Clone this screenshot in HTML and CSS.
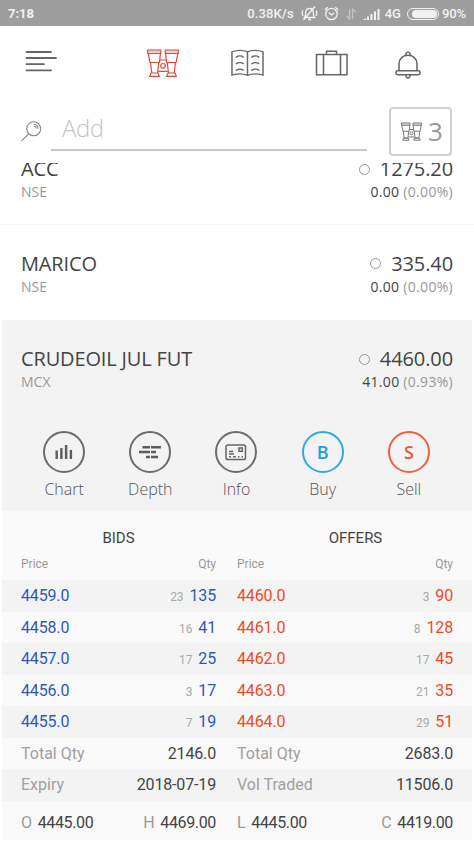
FILE: index.html
```html
<!DOCTYPE html>
<html lang="en">
<head>
<meta charset="utf-8">
<title>Marketwatch</title>
<link rel="stylesheet" href="styles.css">
</head>
<body>
<svg class="defs" aria-hidden="true">
  <symbol id="binoculars" viewBox="0 0 32 28">
    <path class="band" d="M.7 1h13v3.500H.7zM18.300 1h13v3.500h-13z"/>
    <path d="M1.200 4.500l1.700 9h9.600l.9-9M30.800 4.500l-1.700 9h-9.600l-.9-9M3.500 13.500l1.300 10.500h5.700l1.300-10.500M28.500 13.500l-1.300 10.500h-5.700l-1.300-10.500M4 24l-1.300 3.300h9.600L11 24zM28 24l1.300 3.300h-9.600L21 24zM13 11h6M11.500 22.300h9"/>
    <circle cx="16" cy="16.800" r="2.300"/>
  </symbol>
</svg>

<header class="status">
  <span class="clock">7:18</span>
  <span class="speed">0.38K/s</span>
  <svg class="mute" width="17" height="17" viewBox="0 0 17 17"><path d="M3.500 12.500c1.200-1.200 1.200-3 1.200-5C4.700 5 6.300 3.500 8.500 3.500S12.300 5 12.300 7.500c0 2 0 3.800 1.200 5zM7 14.500h3M1.800 5.500C1 7.500 1 9 2 11M15.200 5.500c.8 2 .8 3.500-.2 5.500M2.500 15L14 1.500"/></svg>
  <svg class="alarm" width="15" height="15" viewBox="0 0 15 15"><circle cx="7.500" cy="8" r="5.700"/><path d="M4.700 6.500l2.800 2.500 2.800-2.200M.8 4l2.900-2.800M14.200 4l-2.900-2.800"/></svg>
  <svg class="data" width="12" height="12" viewBox="0 0 12 12"><path d="M4.500 1v10L1.500 8M7.500 11V1l3 3"/></svg>
  <svg class="signal" width="17" height="12" viewBox="0 0 17 12"><path d="M0 12l3-2v2zM4 8.500h2V12H4zM7.500 6h2v6h-2zM11 3.500h2V12h-2zM14.500 1h2v11h-2z"/></svg>
  <span class="network">4G</span>
  <span class="battery"><i></i></span>
  <span class="percent">90%</span>
</header>

<nav class="tabs">
  <svg class="menu" width="32" height="22" viewBox="0 0 32 22"><path d="M1.500 2h24.500M1.500 8h29.500M1.500 14.200h17.500M1.500 20.400h24.500"/></svg>
  <svg class="watch" width="32" height="28"><use href="#binoculars"/></svg>
  <svg class="book" width="33" height="28" viewBox="0 0 34 28"><path d="M17 2.500C13 .5 6 .5 1 2.500v24c5-1.500 12-1.500 16 .2 4-1.700 11-1.700 16-.2v-24c-5-2-12-2-16 0zM17 2.500v24.200M5 8.200c2.500-1.800 6-1.800 8 0M5 15c2.500-1.800 6-1.800 8 0M5 21.800c2.500-1.800 6-1.800 8 0M21 8.200c2.500-1.800 6-1.800 8 0M21 15c2.500-1.800 6-1.800 8 0M21 21.800c2.500-1.800 6-1.800 8 0"/></svg>
  <svg class="case" width="33" height="26" viewBox="0 0 33 26"><path d="M1.500 4.500H32v20.300H1.500zM8.500 4.500v20.300M25.500 4.500v20.300M11.500 4.500V1.200H21.500v3.300"/></svg>
  <svg class="bell" width="26" height="29" viewBox="0 0 26 29"><rect x="1" y="19.800" width="24" height="4" rx="2"/><path d="M4 19.800V13C4 7.500 8 4.300 13 4.300s9 3.200 9 8.700v6.800M10.600 4.500C10.200.3 15.800.3 15.400 4.500M10.700 24c.5 4 4.100 4 4.600 0"/></svg>
</nav>

<section class="search">
  <svg class="lens" width="22" height="22" viewBox="0 0 22 22"><circle cx="12.700" cy="8.800" r="7"/><path d="M7.800 13.900L.8 20.700M13.200 4.500c2.300 0 3.700 1.500 3.800 3.700M13.200 6.200c1.300 0 2 .8 2.200 2"/></svg>
  <div class="field">Add</div>
  <div class="picker"><svg width="21" height="19"><use href="#binoculars"/></svg><span>3</span></div>
</section>

<main class="list">
  <article class="quote first">
    <div class="line"><span class="name">ACC</span><i class="dot"></i><span class="price">1275.20</span></div>
    <div class="sub"><span>NSE</span><span class="change"><b>0.00</b> (0.00%)</span></div>
  </article>
  <article class="quote second">
    <div class="line"><span class="name">MARICO</span><i class="dot"></i><span class="price">335.40</span></div>
    <div class="sub"><span>NSE</span><span class="change"><b>0.00</b> (0.00%)</span></div>
  </article>
  <article class="open">
    <div class="quote">
      <div class="line"><span class="name">CRUDEOIL JUL FUT</span><i class="dot"></i><span class="price">4460.00</span></div>
      <div class="sub"><span>MCX</span><span class="change"><b>41.00</b> (0.93%)</span></div>
    </div>
    <div class="actions">
      <div class="action"><span class="ring"><svg width="18" height="16" viewBox="0 0 18 16"><path class="solid" d="M.5 6.500h2.400V15H.5zM5.200 4h2.400v11H5.200zM9.900 1h2.400v14H9.900zM14.700 6h2.400v9h-2.400z"/></svg></span>Chart</div>
      <div class="action"><span class="ring"><svg width="24" height="14" viewBox="0 0 24 14"><path class="solid" d="M4.500 1h7.500v2.500H4.500zM13 1h10v2.500H13zM1 5.800h11v2.500H1zM13 5.800h5v2.500h-5zM8 10.700h4v2.500H8zM13 10.700h7v2.500h-7z"/></svg></span>Depth</div>
      <div class="action"><span class="ring"><svg width="22" height="18" viewBox="0 0 22 18"><rect x="1" y="2" width="19.500" height="14.500" rx="1.800"/><path d="M14 5h3.300v3.300H14zM4 8.500h4M4 11h5M4 13.700h2M8 13.700h3M13 13.700h1.500M16.500 13.700H18"/></svg></span>Info</div>
      <div class="action"><span class="ring buy">B</span>Buy</div>
      <div class="action"><span class="ring sell">S</span>Sell</div>
    </div>
    <div class="depth">
      <div class="titles"><span>BIDS</span><span>OFFERS</span></div>
      <div class="row heads"><p><span>Price</span><span>Qty</span></p><p><span>Price</span><span>Qty</span></p></div>
      <div class="row shade"><p class="bid">4459.0<span><small>23</small>135</span></p><p class="ask">4460.0<span><small>3</small>90</span></p></div>
      <div class="row"><p class="bid">4458.0<span><small>16</small>41</span></p><p class="ask">4461.0<span><small>8</small>128</span></p></div>
      <div class="row shade"><p class="bid">4457.0<span><small>17</small>25</span></p><p class="ask">4462.0<span><small>17</small>45</span></p></div>
      <div class="row"><p class="bid">4456.0<span><small>3</small>17</span></p><p class="ask">4463.0<span><small>21</small>35</span></p></div>
      <div class="row shade"><p class="bid">4455.0<span><small>7</small>19</span></p><p class="ask">4464.0<span><small>29</small>51</span></p></div>
      <div class="row"><p class="stat">Total Qty<span>2146.0</span></p><p class="stat">Total Qty<span>2683.0</span></p></div>
      <div class="row shade"><p class="stat">Expiry<span>2018-07-19</span></p><p class="stat">Vol Traded<span>11506.0</span></p></div>
      <div class="row ohlc"><p><span><em>O</em>4445.00</span><span><em>H</em>4469.00</span></p><p><span><em>L</em>4445.00</span><span><em>C</em>4419.00</span></p></div>
    </div>
  </article>
</main>
</body>
</html>
```
FILE: styles.css
```css
* { box-sizing: border-box; }
body {
  margin: 0;
  width: 474px;
  height: 842px;
  overflow: hidden;
  background: #fff;
  color: #444;
  font-family: "Open Sans", "Noto Sans", sans-serif;
}
p { margin: 0; }
svg { display: block; flex: none; fill: none; stroke: #666; stroke-width: 1.5; }
.defs { position: absolute; width: 0; height: 0; }
.band { fill: currentColor; fill-opacity: .25; }

.status {
  display: flex;
  align-items: center;
  height: 26px;
  padding: 1px 8px 0;
  background: #9e9e9e;
  color: #f1f1f1;
  font: 500 13px/26px Roboto, sans-serif;
}
.status svg { stroke: #f1f1f1; stroke-width: 1.3; }
.clock { font-weight: 700; }
.speed { margin-left: auto; letter-spacing: .1px; }
.mute { margin-left: 7px; }
.alarm { margin-left: 6px; }
.status .data { margin-left: 6px; stroke: #c4c4c4; }
.status .signal { margin-left: 6px; fill: #f1f1f1; stroke: none; }
.network { margin-left: 5px; }
.battery { width: 32px; height: 12px; margin-left: 6px; padding: 1px 1px 1px 4px; border: 1px solid #f1f1f1; border-radius: 6px; }
.battery i { display: block; height: 8px; border-radius: 4px; background: #f1f1f1; }
.percent { margin-left: 3px; letter-spacing: -.1px; }

.tabs { display: flex; align-items: flex-start; height: 75px; padding: 23px 0 0 25px; }
.menu { margin-top: 1px; stroke-width: 1.8; }
.menu, .search .lens { stroke-linecap: round; }
.watch { margin-left: 90px; color: #e2493b; stroke: #e2493b; stroke-width: 1.2; }
.book { margin-left: 52px; }
.case { margin: 1px 0 0 51px; }
.bell { margin: 2px 0 0 47px; }

.search { display: flex; height: 62px; padding: 6px 22px 0 21px; }
.lens { margin-top: 13px; stroke: #888; stroke-width: 1.1; }
.field {
  width: 316px;
  height: 44px;
  margin-left: 8px;
  padding-left: 11px;
  border-bottom: 2px solid #c8c8c8;
  color: #c4c4c4;
  font-weight: 300;
  font-size: 24px;
  line-height: 41px;
  letter-spacing: -.5px;
}
.picker {
  display: flex;
  align-items: center;
  width: 63px;
  height: 49px;
  margin-left: 22px;
  padding-left: 10px;
  border: 2px solid #d0d0d0;
  border-radius: 4px;
  color: #999;
  font-size: 26px;
  line-height: 47px;
}
.picker svg { color: #777; stroke: #777; stroke-width: 1.5; margin-right: 6px; }

.list { height: 679px; overflow: hidden; }
.quote { height: 94.5px; padding: 26px 19px 0 19px; }
.list > .quote { padding-left: 21px; padding-right: 21px; border-bottom: 1px solid #f8f8f8; }
.list > .first { margin-top: -33px; }
.list > .second { height: 95.5px; border-bottom: 0; }
.line { display: flex; align-items: center; height: 26px; font-size: 20px; line-height: 26px; }
.name { margin-right: auto; letter-spacing: -.15px; }
.price { letter-spacing: -.1px; }
.dot { width: 11px; height: 11px; margin-right: 10px; border: 1px solid #999; border-radius: 50%; }
.sub { display: flex; justify-content: space-between; font-size: 14px; line-height: 20px; color: #999; }
.change { letter-spacing: .3px; }
.sub b { color: #444; font-weight: 400; }

.open { width: 470px; height: 520px; margin-left: 2px; background: #f3f3f3; }
.actions { display: flex; height: 96px; padding: 16px 19px 0; }
.action { display: flex; flex-direction: column; align-items: center; width: 86.2px; font-size: 16px; font-weight: 300; line-height: 33px; color: #555; }
.ring { display: flex; align-items: center; justify-content: center; width: 42px; height: 42px; border: 2px solid #6c6c6c; border-radius: 50%; }
.solid { fill: #5c5c5c; stroke: none; }
.buy, .sell { font-size: 18px; font-weight: 600; line-height: 38px; }
.ring.buy { color: #20a0e8; border-color: #30a7ea; }
.ring.sell { color: #ee5533; border-color: #ef6040; }

.depth { height: 329.5px; background: #f9f9f9; font: 16px/31.5px Roboto, sans-serif; }
.titles { display: grid; grid-template-columns: 195px 195px; column-gap: 41px; height: 38px; padding-left: 19px; font-size: 15px; line-height: 55px; text-align: center; }
.titles { column-gap: 42px; }
.row { display: grid; grid-template-columns: 195px 216px; column-gap: 21px; height: 31.5px; padding-left: 19px; }
.shade { background: #f3f3f3; }
.row p { display: flex; justify-content: space-between; letter-spacing: -.15px; }
.bid { color: #3157b7; }
.ask { color: #ec4b26; }
.row small { margin-right: 6px; color: #aaa; font-size: 12px; }
.row .stat { color: #a0a0a0; letter-spacing: 0; }
.stat span { color: #444; letter-spacing: -.15px; }
.row.heads p { color: #999; font-size: 12px; letter-spacing: 0; }
.ohlc { height: 40px; line-height: 44px; }
.row.ohlc p { letter-spacing: -.35px; }
.ohlc em { margin-right: 6px; color: #999; font-style: normal; }
```
